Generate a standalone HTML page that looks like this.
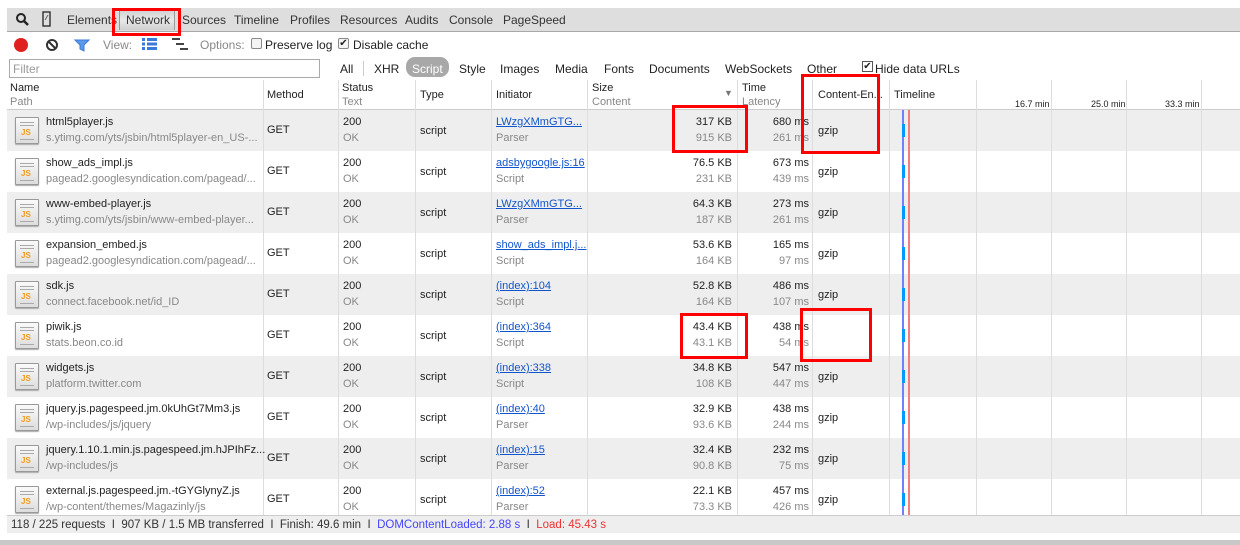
<!DOCTYPE html>
<html><head><meta charset="utf-8"><style>
*{margin:0;padding:0;box-sizing:border-box}
body{width:1240px;height:545px;overflow:hidden;background:#fff;font-family:"Liberation Sans",sans-serif;font-size:11px;color:#222;position:relative}
.a{position:absolute;white-space:nowrap}
.tabs{left:7px;top:8px;width:1233px;height:24px;background:#dedede;border-bottom:1px solid #a8a8a8}
.tab{top:13px;font-size:12px;color:#333}
.g{color:#888}
.row{left:7px;width:1233px;height:41px}
.vl{position:absolute;top:80px;width:1px;height:435px;background:#ddd}
.box{position:absolute;border:3px solid #f00}
.l{color:#15c;text-decoration:underline}
.js{position:absolute;left:8px;top:7px;width:24px;height:27px;background:linear-gradient(#fafafa,#ddd);border:1px solid #999;border-radius:1px;box-shadow:0 1px 1px #aaa}
.js b{position:absolute;left:5px;top:10px;color:#f39a1e;font-size:8px;font-weight:bold}
.js i{position:absolute;left:4px;width:14px;height:1px;background:#aaa}
</style></head><body>
<div class="a tabs"></div>
<svg class="a" style="left:15px;top:12px" width="16" height="16"><circle cx="6" cy="6" r="4" fill="none" stroke="#222" stroke-width="2"/><line x1="9" y1="9" x2="13" y2="13" stroke="#222" stroke-width="2.5"/></svg>
<svg class="a" style="left:42px;top:11px" width="10" height="17"><rect x="1" y="1" width="7" height="14" fill="none" stroke="#222" stroke-width="1.3"/><line x1="3" y1="9" x2="6" y2="4" stroke="#666"/></svg>
<div class="a tab" style="left:67px">Elements</div>
<div class="a" style="left:119px;top:10px;width:56px;height:20px;background:linear-gradient(#d0d0d0,#e8e8e8,#d0d0d0);border-left:1px solid #999;border-right:1px solid #999"></div>
<div class="a tab" style="left:126px">Network</div>
<div class="a tab" style="left:182px">Sources</div>
<div class="a tab" style="left:234px">Timeline</div>
<div class="a tab" style="left:290px">Profiles</div>
<div class="a tab" style="left:340px">Resources</div>
<div class="a tab" style="left:405px">Audits</div>
<div class="a tab" style="left:449px">Console</div>
<div class="a tab" style="left:503px">PageSpeed</div>
<div class="box" style="left:112px;top:8px;width:69px;height:28px"></div>

<div class="a" style="left:14px;top:38px;width:14px;height:14px;border-radius:50%;background:#e02020"></div>
<svg class="a" style="left:45px;top:38px" width="14" height="14"><circle cx="7" cy="7" r="5" fill="none" stroke="#333" stroke-width="2"/><line x1="3.5" y1="3.5" x2="10.5" y2="10.5" stroke="#333" stroke-width="2"/></svg>
<svg class="a" style="left:74px;top:39px" width="16" height="13"><path d="M1 1H15L10 6V12L6 10V6Z" fill="#5a9ae8" stroke="#3a7ad8"/></svg>
<div class="a g" style="left:103px;top:38px;font-size:12px">View:</div>
<svg class="a" style="left:142px;top:38px" width="15" height="12" fill="#3a7ad8"><rect x="0" y="0" width="3" height="3"/><rect x="5" y="0" width="10" height="3"/><rect x="0" y="4.5" width="3" height="3"/><rect x="5" y="4.5" width="10" height="3"/><rect x="0" y="9" width="3" height="3"/><rect x="5" y="9" width="10" height="3"/></svg>
<svg class="a" style="left:172px;top:38px" width="16" height="13" fill="#444"><rect x="0" y="0" width="8" height="2"/><rect x="4" y="5" width="8" height="2"/><rect x="8" y="10" width="8" height="2"/></svg>
<div class="a g" style="left:200px;top:38px;font-size:12px">Options:</div>
<div class="a" style="left:251px;top:38px;width:11px;height:11px;border:1px solid #888;border-radius:2px;background:#f4f4f4"></div>
<div class="a" style="left:265px;top:38px;font-size:12px">Preserve log</div>
<div class="a" style="left:338px;top:38px;width:11px;height:11px;border:1px solid #888;border-radius:2px;background:#f4f4f4;font-size:10px;line-height:9px;text-align:center">✔</div>
<div class="a" style="left:353px;top:38px;font-size:12px">Disable cache</div>

<div class="a" style="left:9px;top:59px;width:311px;height:19px;border:1px solid #aaa;"></div>
<div class="a" style="left:13px;top:62px;color:#999;font-size:12px">Filter</div>
<div class="a" style="left:340px;top:62px;font-size:12px">All</div>
<div class="a" style="left:363px;top:61px;width:1px;height:15px;background:#ccc"></div>
<div class="a" style="left:374px;top:62px;font-size:12px">XHR</div>
<div class="a" style="left:406px;top:57px;width:43px;height:20px;border-radius:9px;background:#a8a8a8"></div>
<div class="a" style="left:412px;top:62px;font-size:12px;color:#fff">Script</div>
<div class="a" style="left:459px;top:62px;font-size:12px">Style</div>
<div class="a" style="left:500px;top:62px;font-size:12px">Images</div>
<div class="a" style="left:555px;top:62px;font-size:12px">Media</div>
<div class="a" style="left:604px;top:62px;font-size:12px">Fonts</div>
<div class="a" style="left:649px;top:62px;font-size:12px">Documents</div>
<div class="a" style="left:725px;top:62px;font-size:12px">WebSockets</div>
<div class="a" style="left:807px;top:62px;font-size:12px">Other</div>
<div class="a" style="left:862px;top:61px;width:11px;height:11px;border:1px solid #555;font-size:10px;line-height:9px;text-align:center">✔</div>
<div class="a" style="left:875px;top:62px;font-size:12px">Hide data URLs</div>

<div class="a" style="left:7px;top:109px;width:1233px;height:1px;background:#ccc"></div>
<div class="a" style="left:10px;top:82px">Name</div><div class="a g" style="left:10px;top:96px">Path</div>
<div class="a" style="left:267px;top:89px">Method</div>
<div class="a" style="left:342px;top:82px">Status</div><div class="a g" style="left:342px;top:96px">Text</div>
<div class="a" style="left:420px;top:89px">Type</div>
<div class="a" style="left:496px;top:89px">Initiator</div>
<div class="a" style="left:592px;top:82px">Size</div><div class="a g" style="left:592px;top:96px">Content</div>
<div class="a" style="left:724px;top:88px;color:#777;font-size:9px">▼</div>
<div class="a" style="left:742px;top:82px">Time</div><div class="a g" style="left:742px;top:96px">Latency</div>
<div class="a" style="left:818px;top:89px">Content-En...</div>
<div class="a" style="left:894px;top:89px">Timeline</div>
<div class="a" style="left:1015px;top:99px;font-size:9px">16.7 min</div>
<div class="a" style="left:1091px;top:99px;font-size:9px">25.0 min</div>
<div class="a" style="left:1165px;top:99px;font-size:9px">33.3 min</div>

<div class="a row" style="top:110px;background:#eee"></div>
<div class="a row" style="top:192px;background:#eee"></div>
<div class="a row" style="top:274px;background:#eee"></div>
<div class="a row" style="top:356px;background:#eee"></div>
<div class="a row" style="top:438px;background:#eee"></div>

<div class="vl" style="left:263px"></div><div class="vl" style="left:338px"></div><div class="vl" style="left:415px"></div><div class="vl" style="left:491px"></div><div class="vl" style="left:587px"></div><div class="vl" style="left:737px"></div><div class="vl" style="left:812px"></div><div class="vl" style="left:889px"></div><div class="vl" style="left:976px"></div><div class="vl" style="left:1051px"></div><div class="vl" style="left:1126px"></div><div class="vl" style="left:1201px"></div>
<div class="a" style="left:902px;top:110px;width:2px;height:405px;background:#7080ff"></div>
<div class="a" style="left:908px;top:110px;width:2px;height:405px;background:#f08080"></div>

<div id="rows"></div>
<script>
var d=[["html5player.js","s.ytimg.com/yts/jsbin/html5player-en_US-...","LWzgXMmGTG...","Parser","317 KB","915 KB","680 ms","261 ms","gzip"],
["show_ads_impl.js","pagead2.googlesyndication.com/pagead/...","adsbygoogle.js:16","Script","76.5 KB","231 KB","673 ms","439 ms","gzip"],
["www-embed-player.js","s.ytimg.com/yts/jsbin/www-embed-player...","LWzgXMmGTG...","Parser","64.3 KB","187 KB","273 ms","261 ms","gzip"],
["expansion_embed.js","pagead2.googlesyndication.com/pagead/...","show_ads_impl.j...","Script","53.6 KB","164 KB","165 ms","97 ms","gzip"],
["sdk.js","connect.facebook.net/id_ID","(index):104","Script","52.8 KB","164 KB","486 ms","107 ms","gzip"],
["piwik.js","stats.beon.co.id","(index):364","Script","43.4 KB","43.1 KB","438 ms","54 ms",""],
["widgets.js","platform.twitter.com","(index):338","Script","34.8 KB","108 KB","547 ms","447 ms","gzip"],
["jquery.js.pagespeed.jm.0kUhGt7Mm3.js","/wp-includes/js/jquery","(index):40","Parser","32.9 KB","93.6 KB","438 ms","244 ms","gzip"],
["jquery.1.10.1.min.js.pagespeed.jm.hJPIhFz...","/wp-includes/js","(index):15","Parser","32.4 KB","90.8 KB","232 ms","75 ms","gzip"],
["external.js.pagespeed.jm.-tGYGlynyZ.js","/wp-content/themes/Magazinly/js","(index):52","Parser","22.1 KB","73.3 KB","457 ms","426 ms","gzip"]];
var h="";d.forEach(function(r,i){var t=110+41*i;
h+='<div class="a" style="left:7px;top:'+t+'px;width:40px;height:41px"><div class="js"><i style="top:4px"></i><i style="top:7px"></i><b>JS</b><i style="top:21px"></i></div></div>';
h+='<div class="a" style="left:46px;top:'+(t+6)+'px">'+r[0]+'</div><div class="a g" style="left:46px;top:'+(t+22)+'px">'+r[1]+'</div>';
h+='<div class="a" style="left:267px;top:'+(t+14)+'px">GET</div>';
h+='<div class="a" style="left:343px;top:'+(t+6)+'px">200</div><div class="a g" style="left:343px;top:'+(t+22)+'px">OK</div>';
h+='<div class="a" style="left:420px;top:'+(t+15)+'px">script</div>';
h+='<div class="a l" style="left:496px;top:'+(t+6)+'px">'+r[2]+'</div><div class="a g" style="left:496px;top:'+(t+22)+'px">'+r[3]+'</div>';
h+='<div class="a" style="right:508px;top:'+(t+6)+'px">'+r[4]+'</div><div class="a g" style="right:508px;top:'+(t+22)+'px">'+r[5]+'</div>';
h+='<div class="a" style="right:431px;top:'+(t+6)+'px">'+r[6]+'</div><div class="a g" style="right:431px;top:'+(t+22)+'px">'+r[7]+'</div>';
h+='<div class="a" style="left:818px;top:'+(t+15)+'px">'+r[8]+'</div>';
h+='<div class="a" style="left:902px;top:'+(t+14)+'px;width:3px;height:13px;background:#09f"></div>';});
document.getElementById("rows").innerHTML=h;
</script>

<div class="box" style="left:672px;top:105px;width:76px;height:48px"></div>
<div class="box" style="left:801px;top:74px;width:79px;height:80px"></div>
<div class="box" style="left:680px;top:313px;width:68px;height:46px"></div>
<div class="box" style="left:800px;top:308px;width:72px;height:54px"></div>

<div class="a" style="left:7px;top:515px;width:1233px;height:18px;background:#eee;border-top:1px solid #ccc"></div>
<div class="a" style="left:11px;top:519px;font-size:11.5px;color:#333">118 / 225 requests &nbsp;I&nbsp; 907 KB / 1.5 MB transferred &nbsp;I&nbsp; Finish: 49.6 min &nbsp;I&nbsp; <span style="color:#44f">DOMContentLoaded: 2.88 s</span> &nbsp;I&nbsp; <span style="color:#e33">Load: 45.43 s</span></div>
<div class="a" style="left:0;top:540px;width:1240px;height:5px;background:#c8c8c8"></div>
</body></html>
